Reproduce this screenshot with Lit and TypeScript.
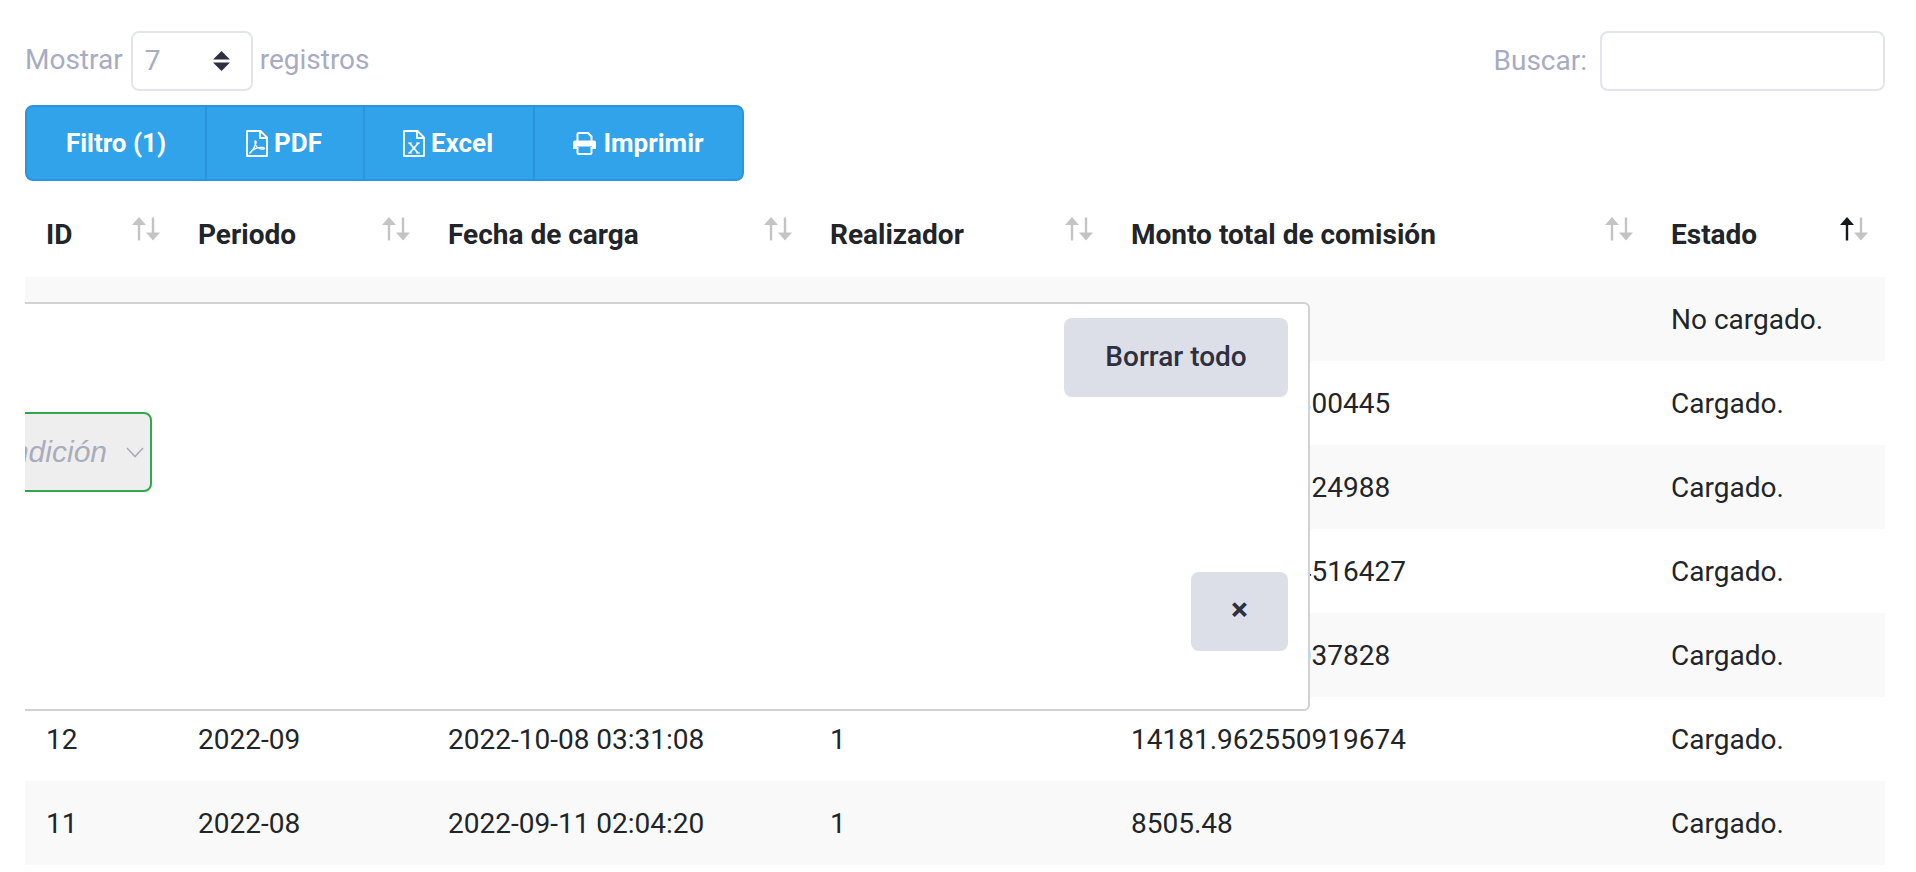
import { LitElement, html, css, svg } from "lit";
import { customElement } from "lit/decorators.js";

const sortIcon = (active = false) => html`<svg class="sort ${active ? "active" : ""}" width="28" height="24" viewBox="0 0 28 24">
  <path class="up" d="M7 0L14 8H8.2V23.5H5.8V8H0Z"/>
  <path class="down" d="M19.8 0.5H22.2V15.5H28L21 23.5L14 15.5H19.8Z"/>
</svg>`;

const docOutline = svg`<path d="M1 1H14.5L21 7.5V26H1Z" fill="none" stroke="#fff" stroke-width="1.8" stroke-linejoin="round"/><path d="M14 1V8H21" fill="none" stroke="#fff" stroke-width="1.8"/>`;

const pdfIcon = html`<svg class="ico" width="22" height="27" viewBox="0 0 22 27">${docOutline}
  <path d="M3.5 23.5C6 21.5 8.5 17.5 10 13C10.4 11.5 9.5 10 9 11.5C8.8 13.5 10 16.5 12.5 18C14 19 18 19.5 18.5 18.5C18.5 17.5 14.5 17 11.5 17.8C9 18.5 5 21 3.5 23.5Z" fill="none" stroke="#fff" stroke-width="1.3"/>
</svg>`;

const xlsIcon = html`<svg class="ico" width="22" height="27" viewBox="0 0 22 27">${docOutline}
  <path d="M6.5 13L15 23M15.5 13L6.5 23" fill="none" stroke="#fff" stroke-width="1.8"/>
  <path d="M5 13H9M13 13H17M5 23H9M13 23H17" fill="none" stroke="#fff" stroke-width="1.2"/>
</svg>`;

const printIcon = html`<svg class="ico" width="25" height="23" viewBox="0 0 25 23">
  <path d="M5.5 9V2C5.5 1.4 6 1 6.5 1H16L19.5 4.5V9" fill="none" stroke="#fff" stroke-width="2"/>
  <path d="M3 8.5H22C23.2 8.5 24 9.3 24 10.5V17H20V14.5H5V17H1V10.5C1 9.3 1.8 8.5 3 8.5Z" fill="#fff"/>
  <path d="M5.5 15V20.5C5.5 21.3 6 22 7 22H18C19 22 19.5 21.3 19.5 20.5V15" fill="none" stroke="#fff" stroke-width="2"/>
</svg>`;

const columns = ["ID", "Periodo", "Fecha de carga", "Realizador", "Monto total de comisión", "Estado"];

const rows = [
  ["", "", "", "", "", "No cargado."],
  ["", "", "", "", "14210.58300800445", "Cargado."],
  ["", "", "", "", "14210.58390924988", "Cargado."],
  ["", "", "", "", "14210.583904516427", "Cargado."],
  ["", "", "", "", "14210.58390037828", "Cargado."],
  ["12", "2022-09", "2022-10-08 03:31:08", "1", "14181.962550919674", "Cargado."],
  ["11", "2022-08", "2022-09-11 02:04:20", "1", "8505.48", "Cargado."],
];

@customElement("app-root")
export class AppRoot extends LitElement {
  static styles = css`
    :host {
      display: block;
      padding: 31px 31px 7px 25px;
      font-family: Roboto, "Liberation Sans", sans-serif;
      font-size: 28px;
      color: #212529;
      background: #fff;
    }
    .top {
      display: flex;
      justify-content: space-between;
      align-items: center;
      height: 59px;
      color: #a7abc3;
    }
    .length,
    .search {
      display: flex;
      align-items: center;
    }
    .length > span {
      margin-bottom: 2px;
    }
    .select {
      box-sizing: border-box;
      width: 122px;
      height: 60px;
      margin: 0 7px 0 8px;
      padding: 0 21px 0 12px;
      display: flex;
      align-items: center;
      justify-content: space-between;
      border: 2px solid #e2e5ec;
      border-radius: 8px;
    }
    .input {
      box-sizing: border-box;
      width: 285px;
      height: 60px;
      margin-left: 13px;
      border: 2px solid #e2e5ec;
      border-radius: 8px;
    }
    .group {
      display: inline-flex;
      margin-top: 15px;
      height: 76px;
      box-sizing: border-box;
      background: #31a3ea;
      border: 2px solid #2a94dc;
      border-radius: 8px;
      vertical-align: top;
    }
    .btn {
      display: flex;
      align-items: center;
      justify-content: center;
      gap: 6px;
      box-sizing: border-box;
      color: #fff;
      font-size: 26px;
      font-weight: 700;
      border-left: 2px solid #2a94dc;
    }
    .btn:first-child {
      border-left: 0;
    }
    .b1 { width: 178px; }
    .b2 { width: 158px; padding-right: 2px; }
    .b3 { width: 170px; padding-right: 2px; }
    .b4 { width: 209px; padding-right: 1px; }
    .wrap {
      position: relative;
      overflow: hidden;
      margin-top: 12px;
    }
    table {
      width: 1860px;
      table-layout: fixed;
      border-collapse: collapse;
    }
    th,
    td {
      height: 84px;
      box-sizing: border-box;
      padding: 0 17px 0 21px;
      text-align: left;
      white-space: nowrap;
    }
    th {
      font-weight: 700;
      padding-bottom: 2px;
    }
    .th {
      display: flex;
      align-items: center;
      justify-content: space-between;
    }
    .sort {
      margin-bottom: 11px;
      flex: none;
    }
    .sort path {
      fill: #c4c4c4;
    }
    .sort.active .up {
      fill: #16181b;
    }
    tbody tr:nth-child(odd) {
      background: #f9f9f9;
    }
    .popup {
      position: absolute;
      top: 109px;
      left: -400px;
      width: 1685px;
      height: 409px;
      box-sizing: border-box;
      display: flex;
      justify-content: space-between;
      padding: 14px 20px 58px 245px;
      background: #fff;
      border: 2px solid #d2d2d2;
      border-radius: 6px;
    }
    .cond {
      box-sizing: border-box;
      width: 280px;
      height: 80px;
      margin-top: 94px;
      padding: 0 6px 0 0;
      display: flex;
      align-items: center;
      justify-content: flex-end;
      gap: 19px;
      border: 2px solid #2ea84a;
      border-radius: 8px;
      background: #eee;
      color: #a9acbd;
      font-family: "Liberation Sans", Arial, sans-serif;
      font-style: italic;
      font-size: 30px;
    }
    .actions {
      display: flex;
      flex-direction: column;
      justify-content: space-between;
      align-items: flex-end;
    }
    .soft {
      box-sizing: border-box;
      height: 79px;
      display: flex;
      align-items: center;
      justify-content: center;
      background: #dcdfe8;
      color: #2e3040;
      border-radius: 8px;
      font-size: 28px;
      font-weight: 500;
    }
    .clear { width: 224px; padding-bottom: 2px; }
    .close { width: 97px; font-weight: 700; font-size: 32px; padding-bottom: 5px; }
  `;

  render() {
    return html`
      <div class="top">
        <div class="length">
          <span>Mostrar</span>
          <div class="select">
            <span>7</span>
            <svg width="17" height="20" viewBox="0 0 17 20"><path d="M8.5 0L17 8.5H0ZM0 11.5H17L8.5 20Z" fill="#2e3040"/></svg>
          </div>
          <span>registros</span>
        </div>
        <div class="search">
          <span>Buscar:</span>
          <div class="input"></div>
        </div>
      </div>
      <div class="group">
        <div class="btn b1">Filtro (1)</div>
        <div class="btn b2">${pdfIcon}<span>PDF</span></div>
        <div class="btn b3">${xlsIcon}<span>Excel</span></div>
        <div class="btn b4">${printIcon}<span>Imprimir</span></div>
      </div>
      <div class="wrap">
        <table>
          <colgroup>
            <col style="width:152px" /><col style="width:250px" /><col style="width:382px" />
            <col style="width:301px" /><col style="width:540px" /><col style="width:235px" />
          </colgroup>
          <thead>
            <tr>
              ${columns.map(
                (c) => html`<th><div class="th"><span>${c}</span>${sortIcon(c === "Estado")}</div></th>`
              )}
            </tr>
          </thead>
          <tbody>
            ${rows.map((r) => html`<tr>${r.map((v) => html`<td>${v}</td>`)}</tr>`)}
          </tbody>
        </table>
        <div class="popup">
          <div class="cond">
            <span>Condición</span>
            <svg width="18" height="11" viewBox="0 0 18 11"><path d="M1 1L9 9.5L17 1" fill="none" stroke="#a9acbd" stroke-width="1.6"/></svg>
          </div>
          <div class="actions">
            <div class="soft clear">Borrar todo</div>
            <div class="soft close">×</div>
          </div>
        </div>
      </div>
    `;
  }
}
